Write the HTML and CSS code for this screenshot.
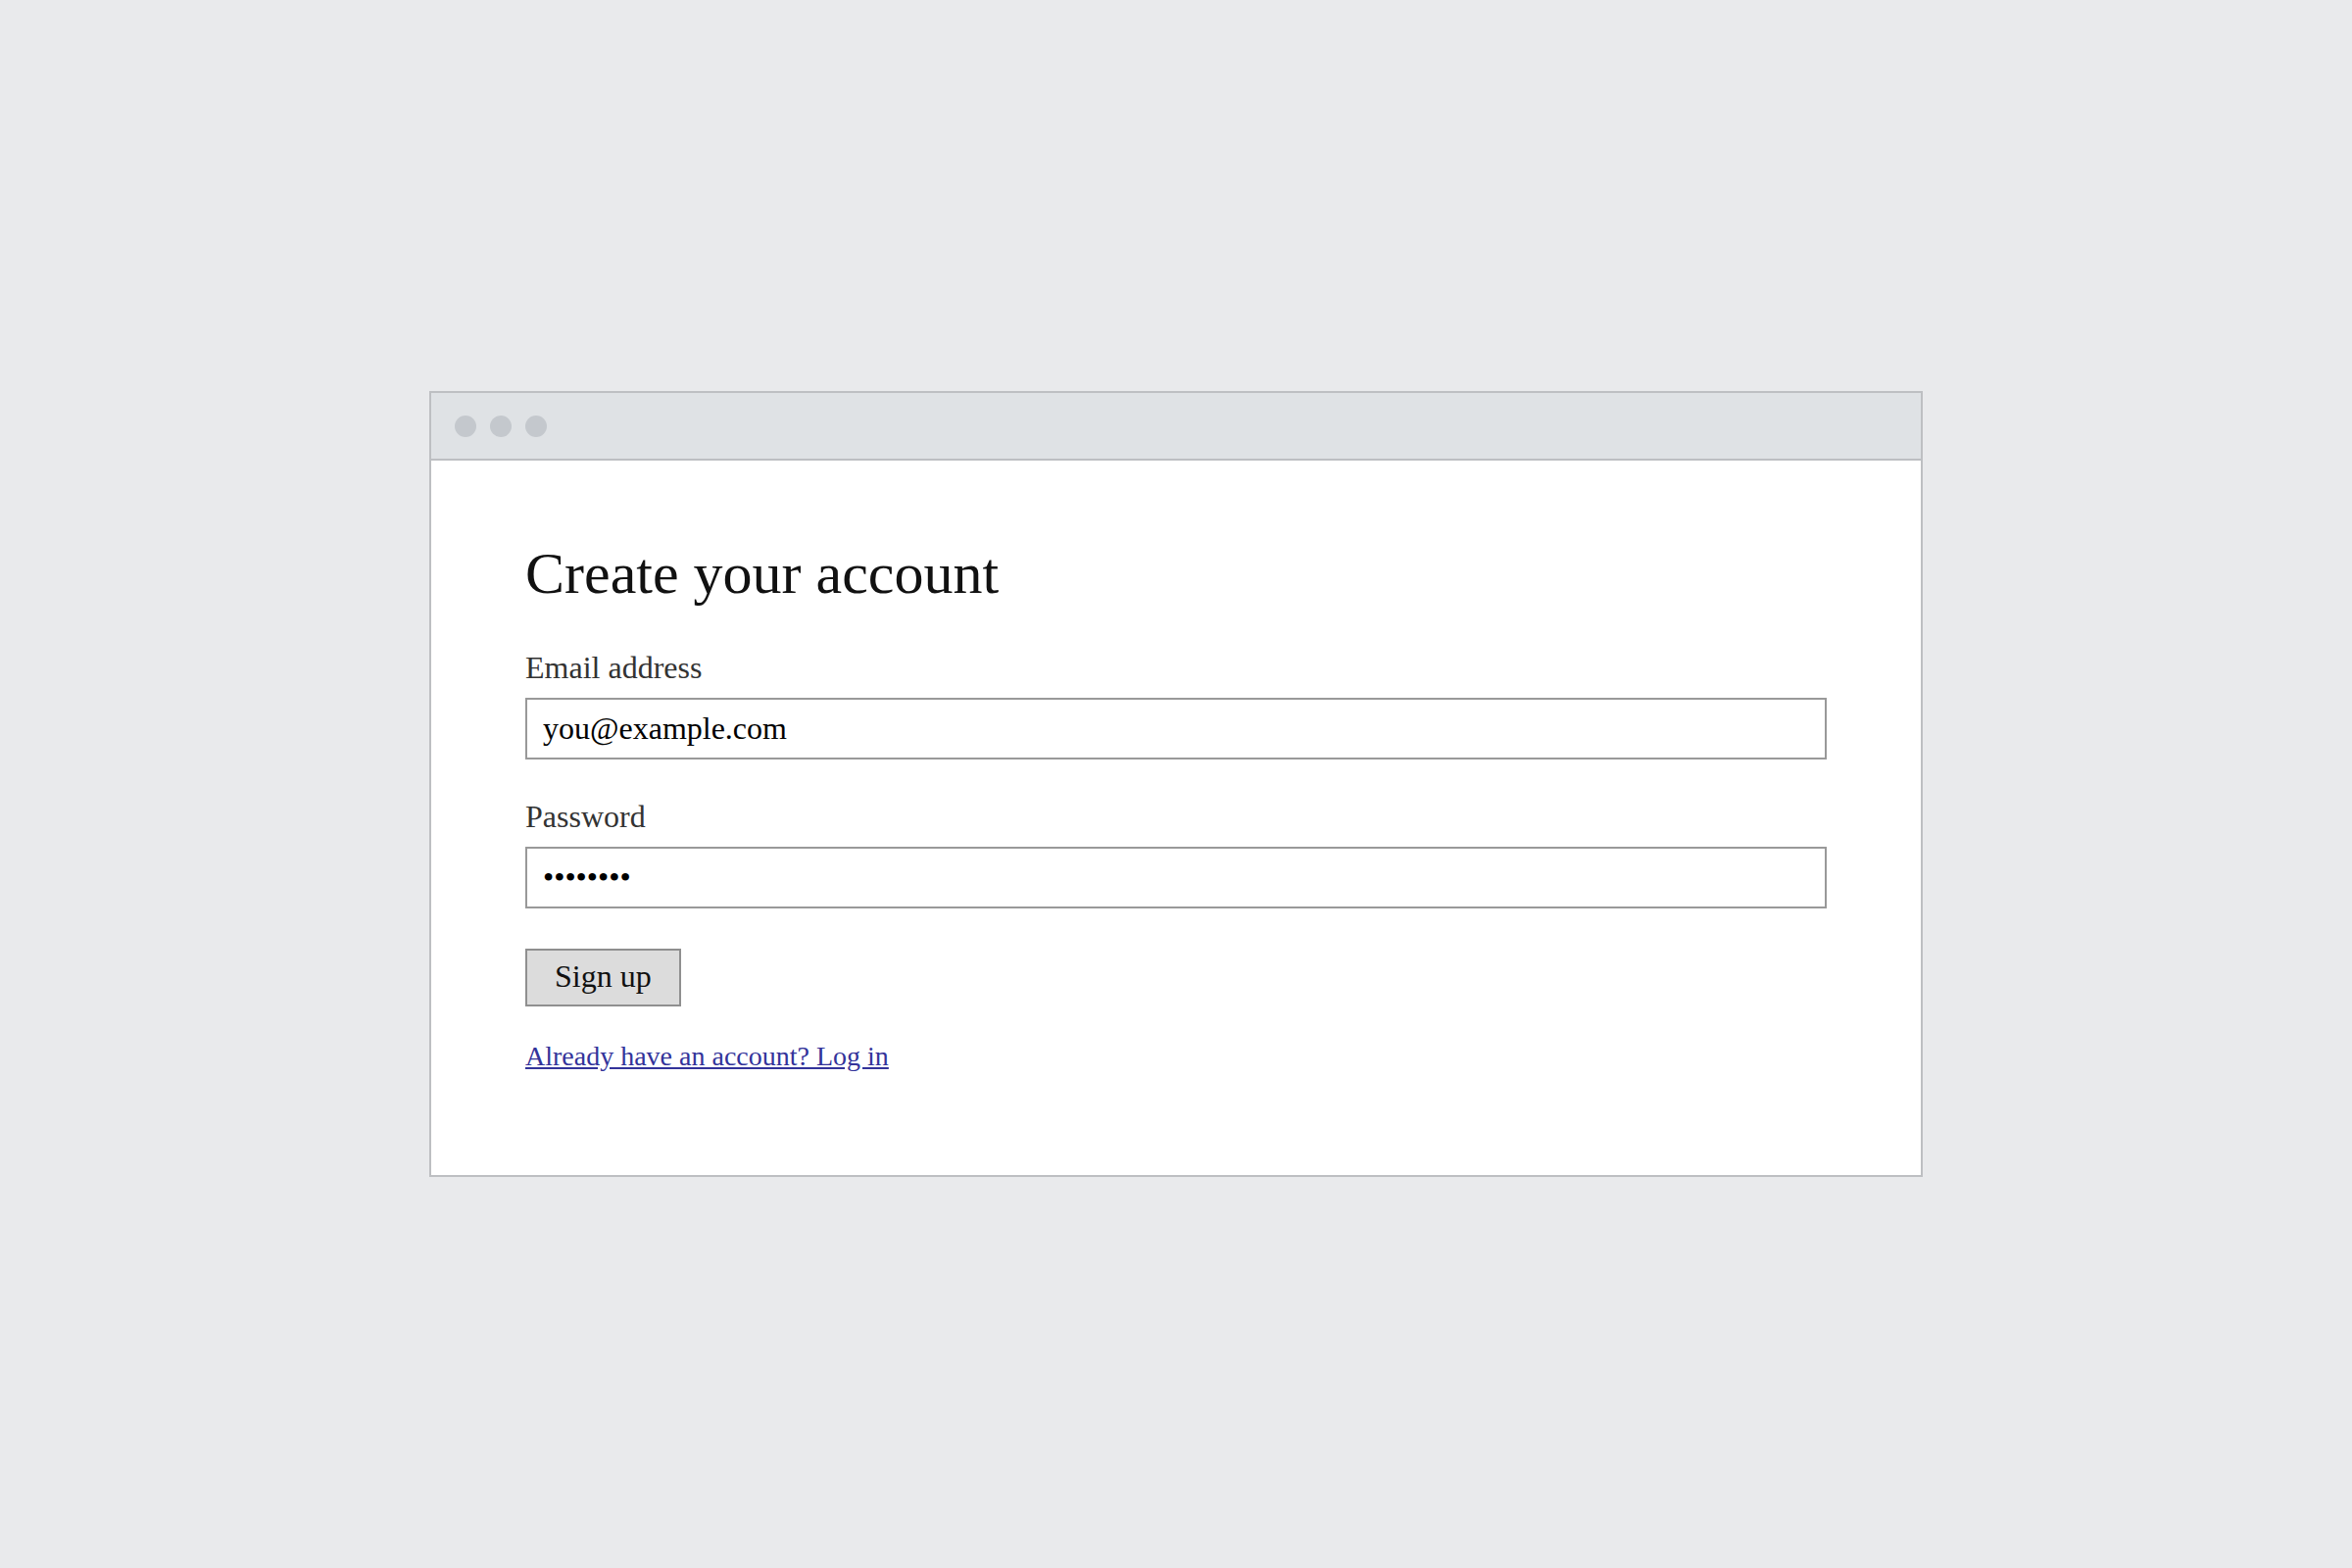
FILE: index.html
```html
<!DOCTYPE html>
<html lang="en">
<head>
<meta charset="utf-8">
<title>Create your account</title>
<link rel="stylesheet" href="styles.css">
</head>
<body>
<div class="window">
  <div class="titlebar">
    <span class="dot"></span>
    <span class="dot"></span>
    <span class="dot"></span>
  </div>
  <form class="content">
    <h1 class="title">Create your account</h1>
    <label class="label" for="email">Email address</label>
    <input class="field field-email" id="email" type="email" value="you@example.com">
    <label class="label" for="password">Password</label>
    <input class="field field-password" id="password" type="password" value="12345678">
    <div class="actions"><button class="btn" type="button">Sign up</button></div>
    <a class="login" href="#">Already have an account? Log in</a>
  </form>
</div>
</body>
</html>
```

FILE: styles.css
```css
html, body {
  margin: 0;
  padding: 0;
}
body {
  background: #e9eaec;
  min-height: 100vh;
  display: flex;
  align-items: center;
  justify-content: center;
  font-family: "Liberation Serif", "Times New Roman", serif;
}
.window {
  width: 1520px;
  border: 2px solid #bdbfc2;
  background: #ffffff;
  display: flex;
  flex-direction: column;
}
.titlebar {
  height: 67px;
  background: #dfe2e5;
  border-bottom: 2px solid #bdbfc2;
  display: flex;
  align-items: center;
  gap: 14px;
  padding-left: 24px;
}
.dot {
  width: 22px;
  height: 22px;
  border-radius: 50%;
  background: #c4c8cd;
}
.content {
  height: 729px;
  box-sizing: border-box;
  padding: 79px 96px 0 96px;
  display: flex;
  flex-direction: column;
  align-items: flex-start;
}
.title {
  margin: 0 0 39.5px 0;
  font-size: 60px;
  line-height: 72px;
  font-weight: 400;
  color: #111111;
}
.label {
  display: block;
  font-size: 32px;
  line-height: 40px;
  color: #333333;
  margin-bottom: 11px;
}
.field {
  display: block;
  width: 100%;
  height: 63px;
  box-sizing: border-box;
  border: 2px solid #999999;
  border-radius: 0;
  padding: 10px 16px 9px 16px;
  font-family: "Liberation Serif", "Times New Roman", serif;
  font-size: 32px;
  line-height: 40px;
  color: #000000;
  background: #ffffff;
  outline: none;
}
.field-email {
  margin-bottom: 38px;
}
.field-password {
  margin-bottom: 41px;
  letter-spacing: 0;
}
.actions {
  margin-bottom: 35px;
}
.btn {
  font-family: "Liberation Serif", "Times New Roman", serif;
  font-size: 32px;
  line-height: 37px;
  padding: 8px 28px 10px 28px;
  border: 2px solid #8f8f8f;
  border-radius: 0;
  background: #dcdcdc;
  color: #111111;
  cursor: pointer;
}
.login {
  font-size: 28px;
  line-height: 32px;
  color: #33339a;
  text-decoration: underline;
}
```
